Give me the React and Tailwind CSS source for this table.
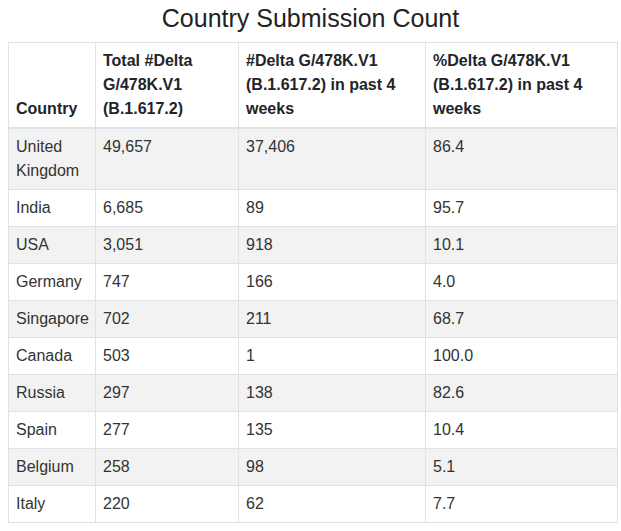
import React from 'react';

const rows = [
    ['United Kingdom', '49,657', '37,406', '86.4'],
    ['India', '6,685', '89', '95.7'],
    ['USA', '3,051', '918', '10.1'],
    ['Germany', '747', '166', '4.0'],
    ['Singapore', '702', '211', '68.7'],
    ['Canada', '503', '1', '100.0'],
    ['Russia', '297', '138', '82.6'],
    ['Spain', '277', '135', '10.4'],
    ['Belgium', '258', '98', '5.1'],
    ['Italy', '220', '62', '7.7'],
];

const App = () => {
    return (
        <div className="bg-white w-[621px] h-[531px] text-[#212529]" style={{ fontFamily: '"Liberation Sans", Arial, sans-serif' }}>
            <h1 className="h-[42px] pt-[3px] text-center text-[25px] leading-[1.2] text-[#222]">Country Submission Count</h1>
            <table className="ml-[8px] w-[609px] table-fixed border-collapse text-[16px] leading-[24px]">
                <colgroup>
                    <col className="w-[87px]" />
                    <col className="w-[143px]" />
                    <col className="w-[187px]" />
                    <col className="w-[192px]" />
                </colgroup>
                <thead>
                    <tr>
                        <th className="border border-[#dee2e6] border-b-2 px-[7px] py-[6px] text-left align-bottom font-bold">Country</th>
                        <th className="border border-[#dee2e6] border-b-2 px-[7px] py-[6px] text-left align-bottom font-bold">Total #Delta G/478K.V1 (B.1.617.2)</th>
                        <th className="border border-[#dee2e6] border-b-2 px-[7px] py-[6px] text-left align-bottom font-bold">#Delta G/478K.V1 (B.1.617.2) in past 4 weeks</th>
                        <th className="border border-[#dee2e6] border-b-2 px-[7px] py-[6px] text-left align-bottom font-bold">%Delta G/478K.V1 (B.1.617.2) in past 4 weeks</th>
                    </tr>
                </thead>
                <tbody>
                    {rows.map((row, i) => (
                        <tr key={row[0]} className={i % 2 === 0 ? 'bg-[#f2f2f2]' : 'bg-white'}>
                            {row.map((cell, j) => (
                                <td key={j} className="border border-[#dee2e6] px-[7px] py-[6px] align-top text-[#333]">{cell}</td>
                            ))}
                        </tr>
                    ))}
                </tbody>
            </table>
        </div>
    );
};

export default App;
